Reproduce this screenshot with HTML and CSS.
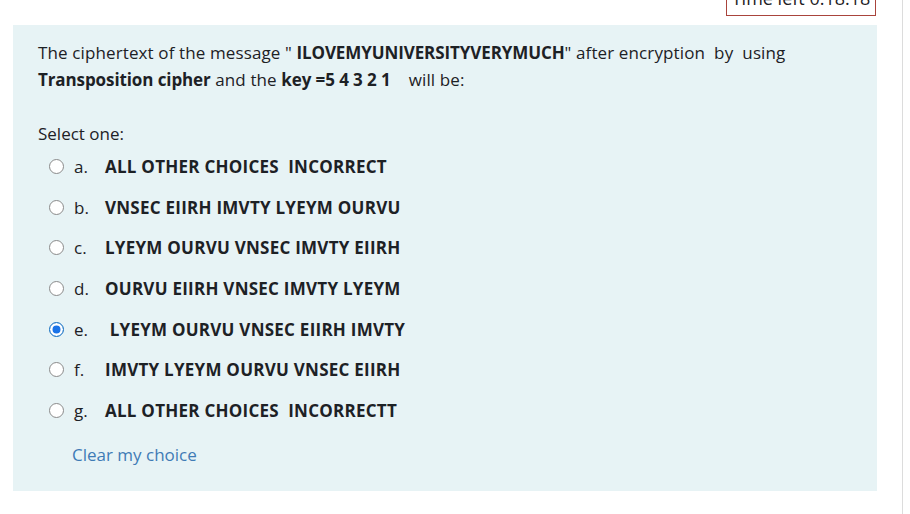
FILE: index.html
```html
<!DOCTYPE html>
<html>
<head>
<meta charset="utf-8">
<link rel="stylesheet" href="styles.css">
</head>
<body>
<div class="page">
  <div class="main">
    <div class="topbar">
      <div class="timer">Time left 0:18:18</div>
    </div>
    <div class="formulation">
      <div class="qtext">
        <p>The ciphertext of the message " <b>ILOVEMYUNIVERSITYVERYMUCH</b>" after encryption&nbsp; by&nbsp; using <b>Transposition cipher</b> and the <b>key =5 4 3 2 1</b>&nbsp;&nbsp;&nbsp; will be:</p>
      </div>
      <div class="prompt">Select one:</div>
      <div class="answer">
        <div class="opt"><span class="radio"></span><span class="num">a.</span><span class="txt">ALL OTHER CHOICES&nbsp; INCORRECT</span></div>
        <div class="opt"><span class="radio"></span><span class="num">b.</span><span class="txt">VNSEC EIIRH IMVTY LYEYM OURVU</span></div>
        <div class="opt"><span class="radio"></span><span class="num">c.</span><span class="txt">LYEYM OURVU VNSEC IMVTY EIIRH</span></div>
        <div class="opt"><span class="radio"></span><span class="num">d.</span><span class="txt">OURVU EIIRH VNSEC IMVTY LYEYM</span></div>
        <div class="opt"><span class="radio checked"></span><span class="num">e.</span><span class="txt">&nbsp;LYEYM OURVU VNSEC EIIRH IMVTY</span></div>
        <div class="opt"><span class="radio"></span><span class="num">f.</span><span class="txt">IMVTY LYEYM OURVU VNSEC EIIRH</span></div>
        <div class="opt"><span class="radio"></span><span class="num">g.</span><span class="txt">ALL OTHER CHOICES&nbsp; INCORRECTT</span></div>
      </div>
      <a class="clear" href="#">Clear my choice</a>
    </div>
  </div>
  <div class="rightline"></div>
</div>
</body>
</html>
```
FILE: styles.css
```css
html, body {
  margin: 0;
  padding: 0;
  background: #ffffff;
}
body {
  font-family: "Open Sans", "Noto Sans", sans-serif;
  font-size: 17px;
  color: #1d2125;
  width: 910px;
  height: 514px;
  overflow: hidden;
}
.page {
  display: flex;
  height: 514px;
}
.main {
  width: 877px;
  padding-left: 13px;
  box-sizing: border-box;
}
.rightline {
  margin-left: 25px;
  width: 1px;
  background: #dcdcdc;
  height: 514px;
}
.topbar {
  display: flex;
  justify-content: flex-end;
  height: 25px;
}
.timer {
  margin-top: -14px;
  height: 30px;
  width: 150px;
  box-sizing: border-box;
  border: 1px solid #a9443c;
  border-top: none;
  text-align: center;
  font-size: 18px;
  line-height: 24px;
  margin-right: 1px;
  color: #1d2125;
}
.formulation {
  background: #e7f3f5;
  height: 466px;
  padding: 14px 25px 0 25px;
  box-sizing: border-box;
}
.qtext p {
  margin: 0;
  line-height: 27px;
  width: 790px;
  letter-spacing: 0.12px;
}
.qtext b {
  letter-spacing: -0.1px;
}
.prompt {
  margin-top: 27px;
  line-height: 27px;
}
.answer {
  margin-top: -1px;
  padding-left: 11px;
}
.opt {
  display: flex;
  align-items: center;
  height: 40.7px;
}
.radio {
  width: 15px;
  height: 15px;
  border-radius: 50%;
  border: 1px solid #8a8a8a;
  background: #fff;
  box-sizing: border-box;
  margin-left: 0;
  margin-right: 10px;
}
.radio.checked {
  border: 1px solid #0f6cbf;
  background: #fff;
  box-shadow: inset 0 0 0 2.5px #fff, inset 0 0 0 8px #1a73e8;
}
.num {
  width: 31px;
}
.txt {
  font-weight: 700;
  letter-spacing: 0.25px;
}
.clear {
  display: inline-block;
  margin-top: 12px;
  margin-left: 34px;
  color: #3f7bb5;
  text-decoration: none;
}
```
